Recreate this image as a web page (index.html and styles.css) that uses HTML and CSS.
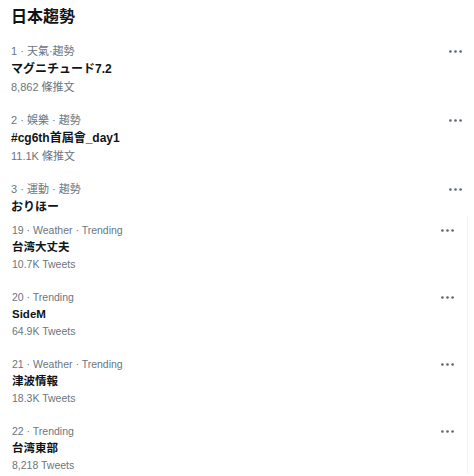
FILE: index.html
```html
<!DOCTYPE html>
<html lang="ja">
<head>
<meta charset="utf-8">
<link rel="stylesheet" href="styles.css">
</head>
<body>
<div class="page">
  <section class="top">
    <h1 class="heading">日本趨勢</h1>
    <ul class="list">
      <li class="item">
        <div class="body">
          <div class="meta">1 · 天氣·趨勢</div>
          <div class="name">マグニチュード7.2</div>
          <div class="count">8,862 條推文</div>
        </div>
        <div class="more"><svg width="13" height="3" viewBox="0 0 13 3"><circle cx="1.4" cy="1.5" r="1.3"/><circle cx="6.5" cy="1.5" r="1.3"/><circle cx="11.6" cy="1.5" r="1.3"/></svg></div>
      </li>
      <li class="item">
        <div class="body">
          <div class="meta">2 · 娛樂 · 趨勢</div>
          <div class="name">#cg6th首屆會_day1</div>
          <div class="count">11.1K 條推文</div>
        </div>
        <div class="more"><svg width="13" height="3" viewBox="0 0 13 3"><circle cx="1.4" cy="1.5" r="1.3"/><circle cx="6.5" cy="1.5" r="1.3"/><circle cx="11.6" cy="1.5" r="1.3"/></svg></div>
      </li>
      <li class="item last">
        <div class="body">
          <div class="meta">3 · 運動 · 趨勢</div>
          <div class="name">おりほー</div>
        </div>
        <div class="more"><svg width="13" height="3" viewBox="0 0 13 3"><circle cx="1.4" cy="1.5" r="1.3"/><circle cx="6.5" cy="1.5" r="1.3"/><circle cx="11.6" cy="1.5" r="1.3"/></svg></div>
      </li>
    </ul>
  </section>
  <section class="bottom">
    <ul class="list small">
      <li class="item">
        <div class="body">
          <div class="meta">19 · Weather · Trending</div>
          <div class="name">台湾大丈夫</div>
          <div class="count">10.7K Tweets</div>
        </div>
        <div class="more"><svg width="13" height="3" viewBox="0 0 13 3"><circle cx="1.4" cy="1.5" r="1.3"/><circle cx="6.5" cy="1.5" r="1.3"/><circle cx="11.6" cy="1.5" r="1.3"/></svg></div>
      </li>
      <li class="item">
        <div class="body">
          <div class="meta">20 · Trending</div>
          <div class="name">SideM</div>
          <div class="count">64.9K Tweets</div>
        </div>
        <div class="more"><svg width="13" height="3" viewBox="0 0 13 3"><circle cx="1.4" cy="1.5" r="1.3"/><circle cx="6.5" cy="1.5" r="1.3"/><circle cx="11.6" cy="1.5" r="1.3"/></svg></div>
      </li>
      <li class="item">
        <div class="body">
          <div class="meta">21 · Weather · Trending</div>
          <div class="name">津波情報</div>
          <div class="count">18.3K Tweets</div>
        </div>
        <div class="more"><svg width="13" height="3" viewBox="0 0 13 3"><circle cx="1.4" cy="1.5" r="1.3"/><circle cx="6.5" cy="1.5" r="1.3"/><circle cx="11.6" cy="1.5" r="1.3"/></svg></div>
      </li>
      <li class="item">
        <div class="body">
          <div class="meta">22 · Trending</div>
          <div class="name">台湾東部</div>
          <div class="count">8,218 Tweets</div>
        </div>
        <div class="more"><svg width="13" height="3" viewBox="0 0 13 3"><circle cx="1.4" cy="1.5" r="1.3"/><circle cx="6.5" cy="1.5" r="1.3"/><circle cx="11.6" cy="1.5" r="1.3"/></svg></div>
      </li>
    </ul>
  </section>
</div>
</body>
</html>
```

FILE: styles.css
```css
* { box-sizing: border-box; }
html, body {
  margin: 0;
  padding: 0;
  background: #ffffff;
}
body {
  font-family: "Liberation Sans", "Noto Sans CJK JP", "Noto Sans CJK TC", sans-serif;
  color: #0f1419;
  width: 474px;
  height: 476px;
  overflow: hidden;
}
.page {
  display: flex;
  flex-direction: column;
}
.top {
  padding: 0 12px 0 11px;
}
.heading {
  margin: 0;
  padding-top: 5px;
  font-size: 16px;
  line-height: 23px;
  font-weight: 700;
}
.list {
  list-style: none;
  margin: 0;
  padding: 0;
  display: flex;
  flex-direction: column;
  gap: 15px;
}
.top .list {
  margin-top: 14px;
}
.item {
  display: flex;
  align-items: flex-start;
  justify-content: space-between;
}
.body {
  display: flex;
  flex-direction: column;
}
.meta, .count {
  font-size: 11px;
  line-height: 18px;
  color: #6b7680;
}
.name {
  font-size: 12px;
  line-height: 18px;
  font-weight: 700;
}
.more {
  height: 18px;
  display: flex;
  align-items: center;
  fill: #5b6670;
}
.bottom {
  width: 468px;
  border-right: 1px solid #f0f2f3;
  padding: 6px 13px 0 12px;
}
.small {
  gap: 16px;
}
.small .meta, .small .count {
  font-size: 10.5px;
  line-height: 17px;
}
.small .name {
  font-size: 11.5px;
  line-height: 17px;
}
.small .more {
  height: 17px;
}
```
